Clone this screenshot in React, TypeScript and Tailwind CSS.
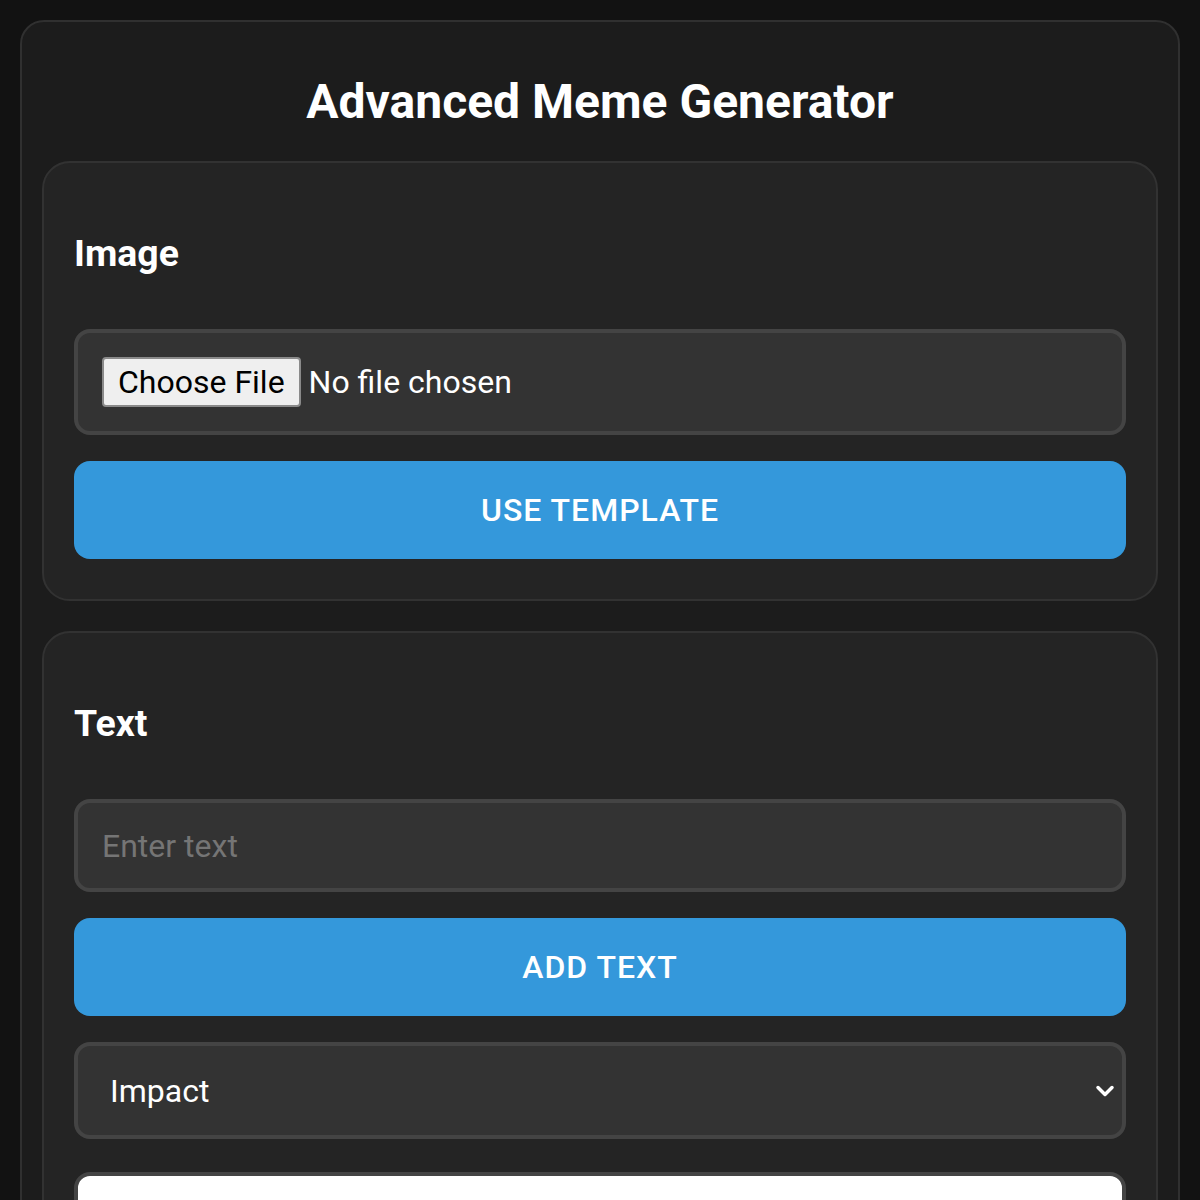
import { useState } from "react"

function Section({ title, children }: { title: string; children: React.ReactNode }) {
    return (
        <div className="bg-[#242424] border-2 border-[#323232] rounded-[28px] px-[30px] pt-[30px] pb-[40px]">
            <h2 className="text-[37.4px] font-bold text-white leading-[44px] mt-[38px] mb-[54px]">{title}</h2>
            <div className="flex flex-col gap-[26px]">{children}</div>
        </div>
    )
}

function BlueButton({ label }: { label: string }) {
    return (
        <button className="w-full h-[98px] bg-[#3498db] rounded-[16px] text-white text-[32px] font-medium tracking-[1px] uppercase">
            {label}
        </button>
    )
}

export default function App() {
    const [text, setText] = useState("")
    const [font, setFont] = useState("Impact")

    return (
        <div className="min-h-screen bg-[#121212] p-[20px] font-['Roboto',sans-serif]">
            <div className="bg-[#1c1c1c] border-2 border-[#303030] rounded-[24px] p-[20px]">
                <h1 className="text-[48px] font-bold text-white text-center leading-[56px] mt-[32px] mb-[31px]">
                    Advanced Meme Generator
                </h1>

                <div className="flex flex-col gap-[30px]">
                    <Section title="Image">
                        <label className="flex items-center h-[106px] bg-[#333333] border-4 border-[#444444] rounded-[16px] px-[24px] cursor-pointer">
                            <input type="file" className="hidden" />
                            <span className="h-[50px] flex items-center px-[14px] bg-[#efefef] border-2 border-[#8a8a8a] rounded-[4px] text-black text-[32px]">
                                Choose File
                            </span>
                            <span className="ml-[8px] text-white text-[32px]">No file chosen</span>
                        </label>
                        <BlueButton label="Use Template" />
                    </Section>

                    <Section title="Text">
                        <input
                            value={text}
                            onChange={(e) => setText(e.target.value)}
                            placeholder="Enter text"
                            className="h-[93px] bg-[#333333] border-4 border-[#444444] rounded-[16px] px-[24px] text-[32px] text-white placeholder:text-[#757575] outline-none"
                        />
                        <BlueButton label="Add Text" />
                        <div className="relative">
                            <select
                                value={font}
                                onChange={(e) => setFont(e.target.value)}
                                className="w-full h-[97px] appearance-none bg-[#333333] border-4 border-[#444444] rounded-[16px] pl-[32px] pr-[60px] text-[32px] text-white outline-none"
                            >
                                <option>Impact</option>
                                <option>Arial</option>
                                <option>Comic Sans MS</option>
                            </select>
                            <svg
                                className="absolute right-[11px] top-1/2 -translate-y-1/2 pointer-events-none"
                                width="20"
                                height="14"
                                viewBox="0 0 20 14"
                                fill="none"
                            >
                                <path d="M3 3.5l7 7 7-7" stroke="white" strokeWidth="3.5" strokeLinecap="round" strokeLinejoin="round" />
                            </svg>
                        </div>
                        <div className="mt-[7px] h-[97px] bg-white border-4 border-[#444444] rounded-[16px]" />
                    </Section>
                </div>
            </div>
        </div>
    )
}
